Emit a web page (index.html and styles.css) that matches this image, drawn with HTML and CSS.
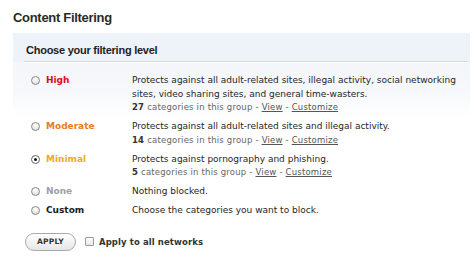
FILE: index.html
```html
<!DOCTYPE html>
<html>
<head>
<meta charset="utf-8">
<link rel="stylesheet" href="styles.css">
</head>
<body>
<h1 class="title">Content Filtering</h1>
<div class="panel">
  <div class="panel-head">Choose your filtering level</div>
  <div class="panel-body">
    <div class="row">
      <div class="opt"><span class="radio"></span><span class="label high">High</span></div>
      <div class="desc">
        <div>Protects against all adult-related sites, illegal activity, social networking sites, video sharing sites, and general time-wasters.</div>
        <div class="meta"><b>27</b> categories in this group - <a>View</a> - <a>Customize</a></div>
      </div>
    </div>
    <div class="row">
      <div class="opt"><span class="radio"></span><span class="label moderate">Moderate</span></div>
      <div class="desc">
        <div>Protects against all adult-related sites and illegal activity.</div>
        <div class="meta"><b>14</b> categories in this group - <a>View</a> - <a>Customize</a></div>
      </div>
    </div>
    <div class="row">
      <div class="opt"><span class="radio checked"></span><span class="label minimal">Minimal</span></div>
      <div class="desc">
        <div>Protects against pornography and phishing.</div>
        <div class="meta"><b>5</b> categories in this group - <a>View</a> - <a>Customize</a></div>
      </div>
    </div>
    <div class="row">
      <div class="opt"><span class="radio"></span><span class="label none">None</span></div>
      <div class="desc"><div>Nothing blocked.</div></div>
    </div>
    <div class="row">
      <div class="opt"><span class="radio"></span><span class="label custom">Custom</span></div>
      <div class="desc"><div>Choose the categories you want to block.</div></div>
    </div>
  </div>
</div>
<div class="actions">
  <button class="apply">APPLY</button>
  <span class="check"></span>
  <span class="all">Apply to all networks</span>
</div>
</body>
</html>
```
FILE: styles.css
```css
html, body {
  margin: 0;
  padding: 0;
  background: #fff;
}
body {
  width: 474px;
  height: 268px;
  overflow: hidden;
  font-family: "DejaVu Sans", Verdana, sans-serif;
  color: #222;
}
.title {
  margin: 0;
  padding: 10px 0 0 13px;
  height: 23px;
  font-family: "Liberation Sans", Arial, sans-serif;
  font-size: 13px;
  line-height: 16px;
  font-weight: bold;
  letter-spacing: -0.3px;
  color: #2a2a2a;
}
.panel {
  margin-left: 13px;
  width: 457px;
}
.panel-head {
  background: #eef3f9;
  padding: 12px 0 0 13px;
  height: 17px;
  font-family: "Liberation Sans", Arial, sans-serif;
  font-size: 11px;
  line-height: 11px;
  font-weight: bold;
  letter-spacing: -0.25px;
  color: #1e1e1e;
  position: relative;
}
.panel-head::after {
  content: "";
  position: absolute;
  left: 11px;
  right: 2px;
  bottom: 0;
  height: 1px;
  background: #d6dade;
  box-shadow: 0 1px 0 #fff;
}
.panel-body {
  background: linear-gradient(#f3f6fa 0px, #f6f8fb 30px, #ffffff 55px);
  padding-top: 12px;
}
.row {
  display: flex;
  align-items: flex-start;
  margin-bottom: 5.5px;
}
.opt {
  width: 101px;
  padding-left: 18px;
  display: flex;
  align-items: center;
  height: 13px;
  flex: none;
}
.radio {
  width: 9px;
  height: 9px;
  box-sizing: border-box;
  border-radius: 50%;
  border: 1px solid #8a8a8a;
  background: radial-gradient(circle at 50% 30%, #ffffff, #d8d8d8);
  margin-right: 6px;
  position: relative;
  flex: none;
}
.radio.checked {
  background: #fff;
  border-color: #666;
}
.radio.checked::after {
  content: "";
  position: absolute;
  left: 2px;
  top: 2px;
  width: 3px;
  height: 3px;
  border-radius: 50%;
  background: #111;
}
.label {
  font-size: 9px;
  font-weight: bold;
  line-height: 13px;
}
.high { color: #d4111a; }
.moderate { color: #ec7a1c; }
.minimal { color: #f2a91e; }
.none { color: #a0a0a0; }
.custom { color: #1a1a1a; }
.desc {
  font-size: 9px;
  line-height: 13.5px;
  color: #262626;
  width: 332px;
}
.meta {
  font-size: 8.5px;
  color: #666;
  letter-spacing: 0.2px;
}
.meta b {
  color: #333;
}
.meta a {
  color: #555;
  text-decoration: underline;
}
.actions {
  display: flex;
  align-items: center;
  padding-left: 25px;
  margin-top: 15px;
}
.apply {
  width: 51px;
  height: 18px;
  border-radius: 9px;
  border: 1px solid #a9a9a9;
  background: linear-gradient(#ffffff, #e6e6e6);
  font-family: "DejaVu Sans", Verdana, sans-serif;
  font-size: 7.5px;
  font-weight: bold;
  color: #333;
  padding: 0;
  letter-spacing: 0.2px;
}
.check {
  width: 9px;
  height: 9px;
  box-sizing: border-box;
  border: 1px solid #9a9a9a;
  border-radius: 1px;
  background: linear-gradient(#fff, #e8e8e8);
  margin-left: 9px;
  margin-right: 5px;
}
.all {
  font-size: 8.5px;
  font-weight: bold;
  color: #333;
  letter-spacing: 0.1px;
}
```
